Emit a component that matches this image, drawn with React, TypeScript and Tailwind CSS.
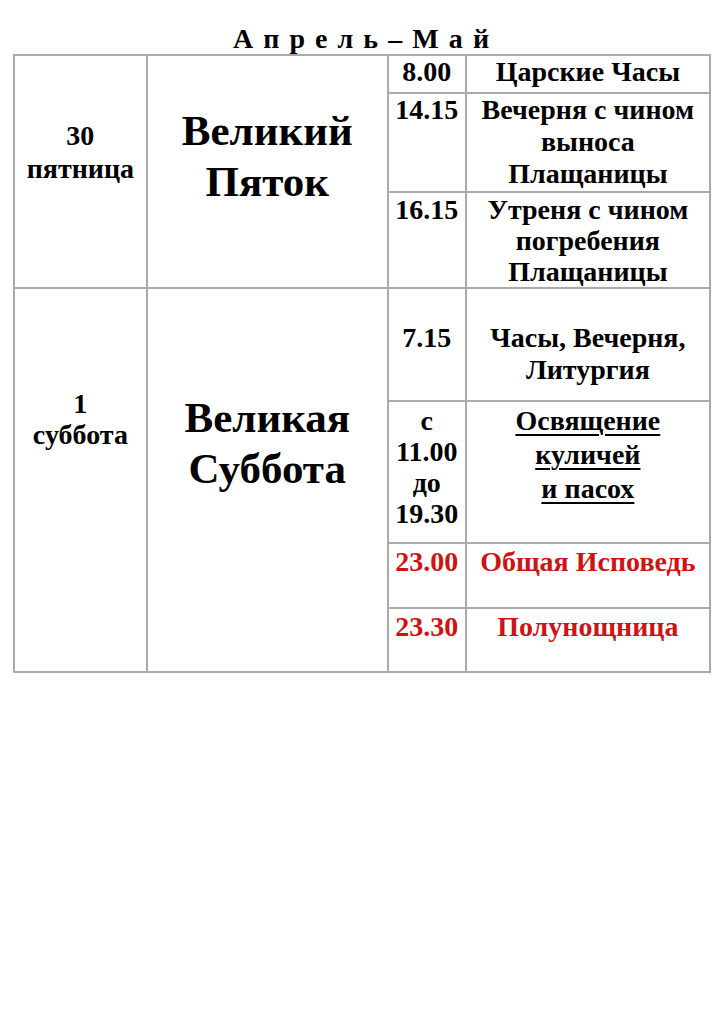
import React from "react";

const B = "border-2 border-[#aaaaaa]";

export default function App() {
  return (
    <div className="w-[724px] h-[1024px] bg-white text-black font-bold" style={{ fontFamily: '"Liberation Serif", "Times New Roman", serif' }}>
      <div className="pt-[24px] h-[54px] text-center text-[28px] leading-[30px] tracking-[0.36em] pl-[8px]">Апрель–Май</div>
      <table className="ml-[13px] border-collapse text-center text-[28px] leading-[32px]" style={{ width: 698 }}>
        <colgroup>
          <col style={{ width: 133 }} />
          <col style={{ width: 242 }} />
          <col style={{ width: 78 }} />
          <col style={{ width: 245 }} />
        </colgroup>
        <tbody>
          <tr className="h-[38px]">
            <td rowSpan={3} className={`${B} align-top pt-[63px] leading-[33px]`}>30<br />пятница</td>
            <td rowSpan={3} className={`${B} align-top pt-[49px] text-[43px] leading-[51px]`}>Великий<br />Пяток</td>
            <td className={`${B} align-top pt-[0px]`}>8.00</td>
            <td className={`${B} align-top pt-[0px]`}>Царские Часы</td>
          </tr>
          <tr className="h-[99px]">
            <td className={`${B} align-top pt-[0px]`}>14.15</td>
            <td className={`${B} align-top pt-[0px]`}>Вечерня с чином<br />выноса<br />Плащаницы</td>
          </tr>
          <tr className="h-[96px]">
            <td className={`${B} align-top pt-[1px] leading-[31px]`}>16.15</td>
            <td className={`${B} align-top pt-[1px] leading-[31px]`}>Утреня с чином<br />погребения<br />Плащаницы</td>
          </tr>
          <tr className="h-[113px]">
            <td rowSpan={4} className={`${B} align-top pt-[99px] leading-[31px]`}>1<br />суббота</td>
            <td rowSpan={4} className={`${B} align-top pt-[103px] text-[43px] leading-[51px]`}>Великая<br />Суббота</td>
            <td className={`${B} align-top pt-[33px]`}>7.15</td>
            <td className={`${B} align-top pt-[33px]`}>Часы, Вечерня,<br />Литургия</td>
          </tr>
          <tr className="h-[142px]">
            <td className={`${B} align-top pt-[3px] leading-[31px]`}>с<br />11.00<br />до<br />19.30</td>
            <td className={`${B} align-top pt-[2px] leading-[34px]`}>
              <span className="underline decoration-2 underline-offset-[4px]">Освящение</span><br />
              <span className="underline decoration-2 underline-offset-[4px]">куличей</span><br />
              <span className="underline decoration-2 underline-offset-[4px]">и пасох</span>
            </td>
          </tr>
          <tr className="h-[65px] text-[#cc1414]">
            <td className={`${B} align-top pt-[2px]`}>23.00</td>
            <td className={`${B} align-top pt-[2px]`}>Общая Исповедь</td>
          </tr>
          <tr className="h-[64px] text-[#cc1414]">
            <td className={`${B} align-top pt-[2px]`}>23.30</td>
            <td className={`${B} align-top pt-[2px]`}>Полунощница</td>
          </tr>
        </tbody>
      </table>
    </div>
  );
}
